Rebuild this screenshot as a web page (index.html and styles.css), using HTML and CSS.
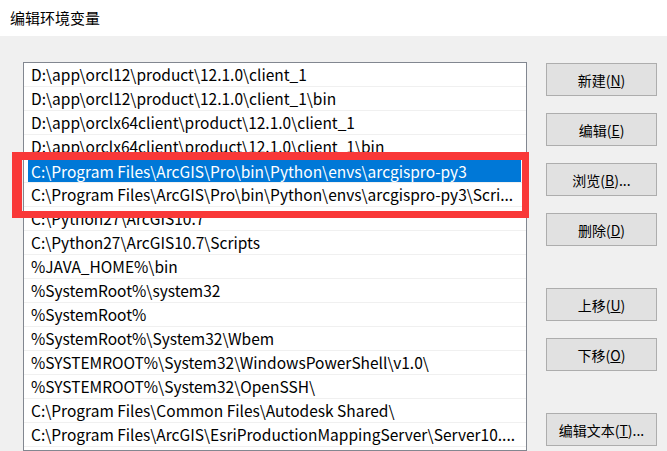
FILE: index.html
```html
<!DOCTYPE html>
<html lang="zh-CN">
<head>
    <meta charset="UTF-8">
    <meta name="viewport" content="width=device-width, initial-scale=1.0">
    <title>编辑环境变量</title>
    <link rel="stylesheet" href="styles.css">
</head>
<body>
    <header class="title-bar">编辑环境变量</header>

    <div class="dialog">
        <div class="path-list">
            <div class="row">D:\app\orcl12\product\12.1.0\client_1</div>
            <div class="row">D:\app\orcl12\product\12.1.0\client_1\bin</div>
            <div class="row">D:\app\orclx64client\product\12.1.0\client_1</div>
            <div class="row">D:\app\orclx64client\product\12.1.0\client_1\bin</div>
            <div class="row selected"><span>C:\Program Files\ArcGIS\Pro\bin\Python\envs\arcgispro-py3</span></div>
            <div class="row">C:\Program Files\ArcGIS\Pro\bin\Python\envs\arcgispro-py3\Scri...</div>
            <div class="row">C:\Python27\ArcGIS10.7</div>
            <div class="row">C:\Python27\ArcGIS10.7\Scripts</div>
            <div class="row">%JAVA_HOME%\bin</div>
            <div class="row">%SystemRoot%\system32</div>
            <div class="row">%SystemRoot%</div>
            <div class="row">%SystemRoot%\System32\Wbem</div>
            <div class="row">%SYSTEMROOT%\System32\WindowsPowerShell\v1.0\</div>
            <div class="row">%SYSTEMROOT%\System32\OpenSSH\</div>
            <div class="row">C:\Program Files\Common Files\Autodesk Shared\</div>
            <div class="row">C:\Program Files\ArcGIS\EsriProductionMappingServer\Server10....</div>
        </div>

        <div class="actions">
            <button class="btn">新建(<u>N</u>)</button>
            <button class="btn">编辑(<u>E</u>)</button>
            <button class="btn">浏览(<u>B</u>)...</button>
            <button class="btn">删除(<u>D</u>)</button>
            <button class="btn group-start">上移(<u>U</u>)</button>
            <button class="btn">下移(<u>O</u>)</button>
            <button class="btn group-start">编辑文本(<u>T</u>)...</button>
        </div>

        <!-- annotation drawn over the screenshot -->
        <div class="highlight-box"></div>
    </div>
</body>
</html>
```

FILE: styles.css
```css
/* Reset */
* {
    margin: 0;
    padding: 0;
    box-sizing: border-box;
}

html, body {
    height: 451px;
    overflow: hidden;
}

body {
    font-family: "Noto Sans CJK SC", "Noto Sans", sans-serif;
    background-color: #f0f0f0;
    color: #000;
}

.title-bar {
    height: 36px;
    line-height: 36px;
    padding-left: 10px;
    background-color: #fff;
    font-size: 15px;
}

.dialog {
    position: relative;
    display: flex;
    align-items: flex-start;
    padding: 26px 0 0 23px;
}

/* Path list box */
.path-list {
    width: 504px;
    height: 389px;
    border: 1px solid #828790;
    background-color: #fff;
    overflow: hidden;
}

.row {
    height: 24px;
    line-height: 23px;
    padding-left: 7px;
    border-bottom: 1px solid #f0f0f0;
    font-size: 15.5px;
    white-space: nowrap;
    overflow: hidden;
}

.row.selected {
    padding: 0 5px 0 4px;
}

.row.selected span {
    display: block;
    height: 24px;
    padding-left: 3px;
    background-color: #0078d7;
    color: #fff;
    border-top: 1px dotted #e8a050;
    line-height: 22px;
}

/* Buttons on the right */
.actions {
    display: flex;
    flex-direction: column;
    gap: 17px;
    width: 111px;
    margin: 1px 0 0 19px;
}

.btn {
    height: 33px;
    background-color: #e1e1e1;
    border: 1px solid #adadad;
    font-family: inherit;
    font-size: 14px;
    color: #000;
}

.btn.group-start {
    margin-top: 25px;
}

.highlight-box {
    position: absolute;
    left: 12px;
    top: 116px;
    width: 517px;
    height: 66px;
    border-style: solid;
    border-color: #f93838;
    border-width: 8px 7px 7px 10px;
}
```
